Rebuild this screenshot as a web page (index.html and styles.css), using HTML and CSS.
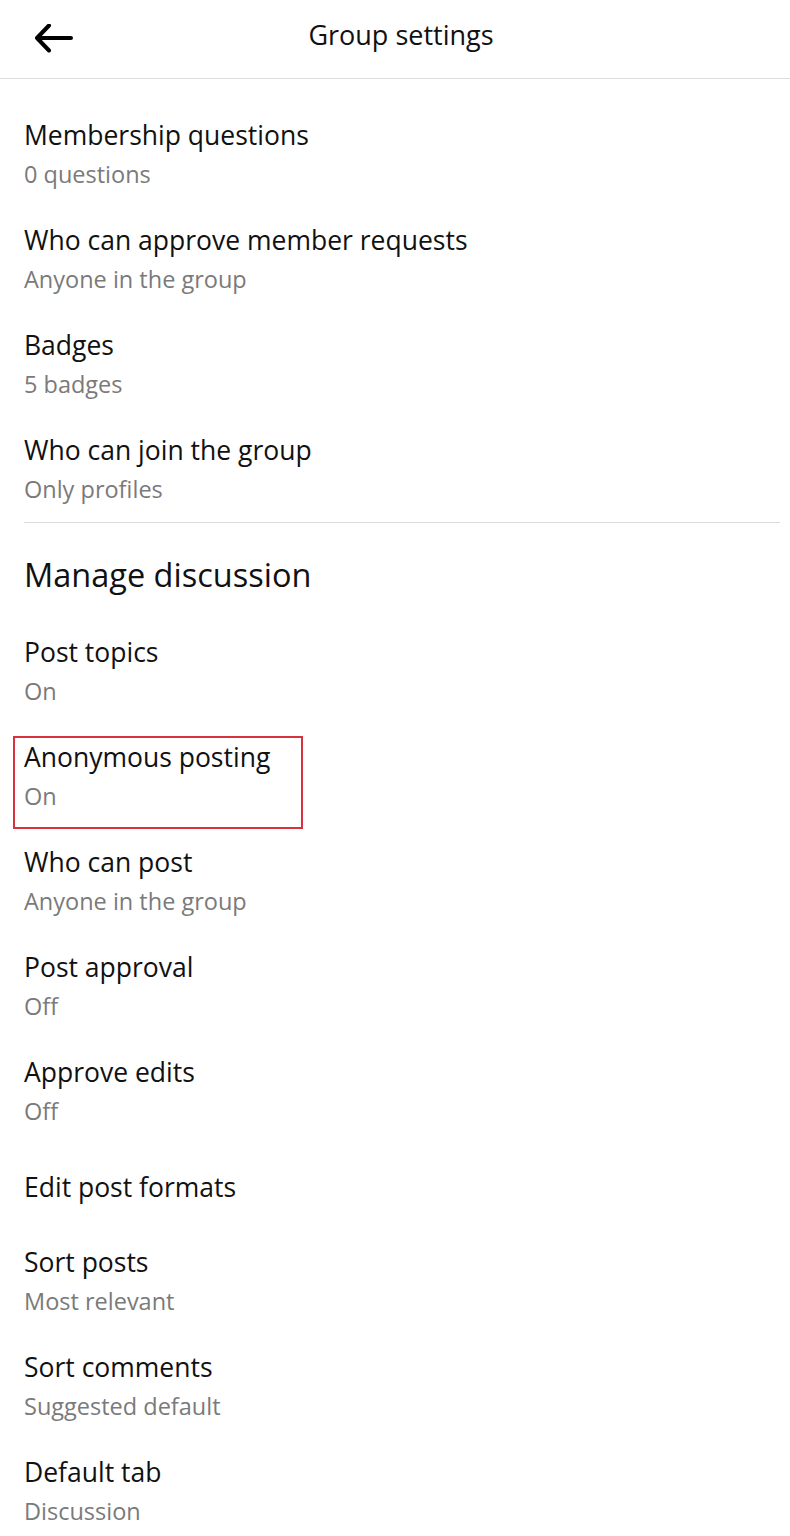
FILE: index.html
```html
<!DOCTYPE html>
<html lang="en">
<head>
    <meta charset="UTF-8">
    <meta name="viewport" content="width=device-width, initial-scale=1.0">
    <title>Group settings</title>
    <link rel="stylesheet" href="styles.css">
</head>
<body>
    <header class="topbar">
        <button class="back-btn" aria-label="Back">
            <svg width="40" height="32" viewBox="0 0 40 32">
                <path d="M3 14 H37 M15 1.5 L3 14 L15 26.5" fill="none" stroke="#000" stroke-width="4" stroke-linecap="round" stroke-linejoin="round"/>
            </svg>
        </button>
        <div class="topbar-title">Group settings</div>
    </header>

    <section class="settings-group first">
        <div class="setting">
            <div class="setting-title">Membership questions</div>
            <div class="setting-value">0 questions</div>
        </div>
        <div class="setting">
            <div class="setting-title">Who can approve member requests</div>
            <div class="setting-value">Anyone in the group</div>
        </div>
        <div class="setting">
            <div class="setting-title">Badges</div>
            <div class="setting-value">5 badges</div>
        </div>
        <div class="setting">
            <div class="setting-title">Who can join the group</div>
            <div class="setting-value">Only profiles</div>
        </div>
    </section>

    <hr class="divider">

    <section class="settings-group">
        <h2 class="group-heading">Manage discussion</h2>
        <div class="setting">
            <div class="setting-title">Post topics</div>
            <div class="setting-value">On</div>
        </div>
        <div class="setting highlighted">
            <div class="setting-title">Anonymous posting</div>
            <div class="setting-value">On</div>
            <span class="highlight-box"></span>
        </div>
        <div class="setting">
            <div class="setting-title">Who can post</div>
            <div class="setting-value">Anyone in the group</div>
        </div>
        <div class="setting">
            <div class="setting-title">Post approval</div>
            <div class="setting-value">Off</div>
        </div>
        <div class="setting">
            <div class="setting-title">Approve edits</div>
            <div class="setting-value">Off</div>
        </div>
        <div class="setting single">
            <div class="setting-title">Edit post formats</div>
        </div>
        <div class="setting">
            <div class="setting-title">Sort posts</div>
            <div class="setting-value">Most relevant</div>
        </div>
        <div class="setting">
            <div class="setting-title">Sort comments</div>
            <div class="setting-value">Suggested default</div>
        </div>
        <div class="setting">
            <div class="setting-title">Default tab</div>
            <div class="setting-value">Discussion</div>
        </div>
    </section>
</body>
</html>
```

FILE: styles.css
```css
body {
    font-family: "Open Sans", Roboto, Arial, sans-serif;
    background: #fff;
    color: #111;
    margin: 0;
    padding: 0;
    width: 790px;
}

.topbar {
    height: 78px;
    border-bottom: 1px solid #dcdcdc;
    display: flex;
    align-items: center;
    position: relative;
}

.back-btn {
    background: none;
    border: none;
    padding: 0;
    margin-left: 34px;
    margin-top: 2px;
    width: 40px;
    height: 32px;
    display: flex;
}

.topbar-title {
    position: absolute;
    top: 16px;
    left: 12px;
    right: 0;
    text-align: center;
    font-size: 27px;
    line-height: 38px;
    color: #111;
    pointer-events: none;
}

.settings-group {
    padding: 0 24px;
}

.settings-group.first {
    padding-top: 26px;
}

.setting {
    padding: 11px 0 16px;
    position: relative;
}

.settings-group.first .setting:last-child {
    padding-bottom: 13px;
}

.setting-title {
    font-size: 26.5px;
    line-height: 38px;
    color: #111;
}

.setting-value {
    font-size: 23.5px;
    line-height: 40px;
    color: #7a7a7a;
}

.setting.single {
    padding: 21px 0 26px;
}

.highlight-box {
    position: absolute;
    top: 9px;
    left: -11px;
    width: 286px;
    height: 89px;
    border: 2px solid #d8323f;
}

.divider {
    border: none;
    border-top: 1px solid #dcdcdc;
    margin: 0 10px 0 24px;
}

.group-heading {
    font-size: 32.5px;
    font-weight: normal;
    line-height: 40px;
    margin: 32px 0 27px;
    color: #111;
}
```
